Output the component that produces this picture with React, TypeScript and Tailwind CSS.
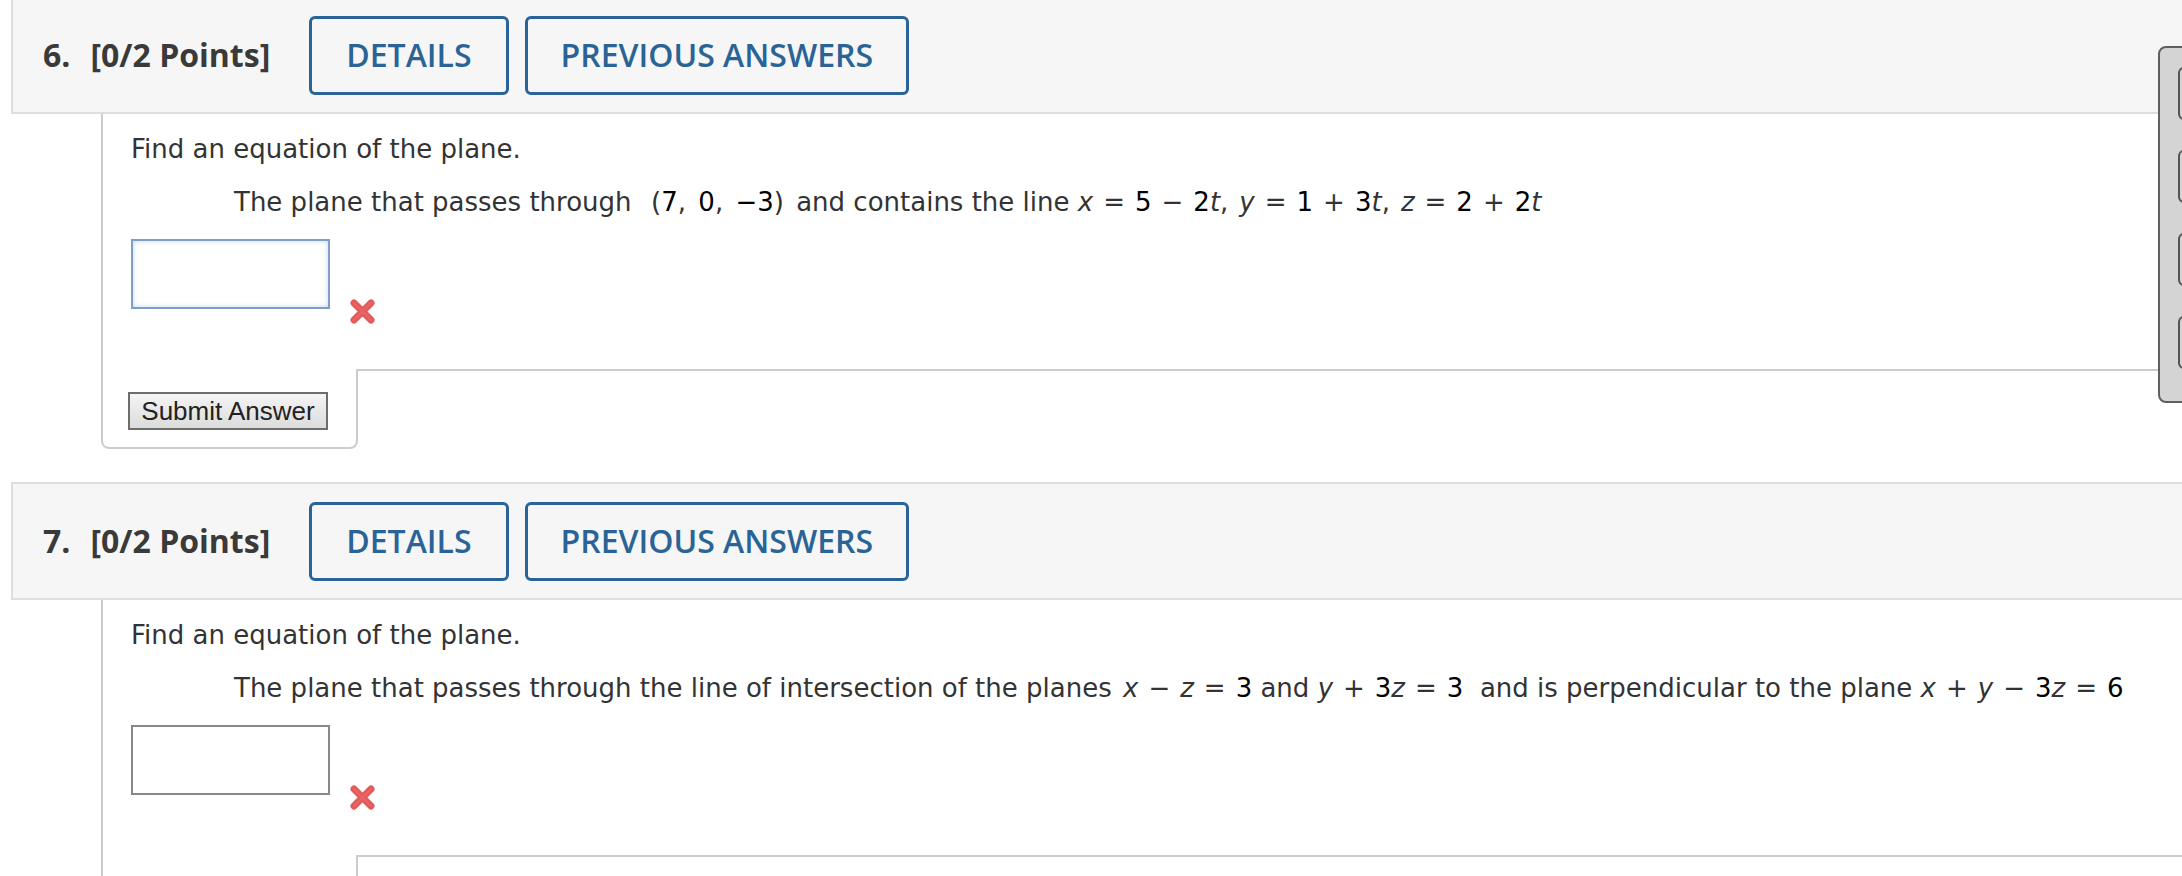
import React from 'react';

const V: React.FC<{ c: string }> = ({ c }) => <i className="italic">{c}</i>;
const N: React.FC<{ c: string }> = ({ c }) => <span className="text-black">{c}</span>;

const Op: React.FC<{ c: string }> = ({ c }) => <span className="mx-[10px]">{c}</span>;
const Comma: React.FC = () => <span className="mr-[4px]">,</span>;
const MathComma: React.FC = () => <span className="mr-[11px]">,</span>;

const RedX: React.FC = () => (
  <svg width="27" height="27" viewBox="0 0 27 27" className="block">
    <path d="M5 5 L22 22 M22 5 L5 22" stroke="#e45a5a" strokeWidth="7" strokeLinecap="round" />
    <path d="M5 5 L22 22 M22 5 L5 22" stroke="#ec7272" strokeWidth="2" strokeLinecap="round" opacity="0.5" />
  </svg>
);

const Header: React.FC<{ num: number }> = ({ num }) => (
  <div className="flex items-center h-[118px] ml-[11px] -mr-[40px] bg-[#f6f6f6] border-2 border-[#dedede] pl-[30px] font-['Open_Sans',sans-serif]">
    <span className="text-[32px] font-bold text-[#3a3a3a] mr-[20px]">{num}.</span>
    <span className="text-[32px] font-bold text-[#3a3a3a]">[0/2 Points]</span>
    <button className="ml-[39px] h-[79px] px-[34px] border-[3px] border-[#2a6496] rounded-[6px] text-[32px] font-semibold text-[#2a6496] bg-transparent">
      DETAILS
    </button>
    <button className="ml-[16px] h-[79px] px-[33px] border-[3px] border-[#2a6496] rounded-[6px] text-[32px] font-semibold text-[#2a6496] bg-transparent">
      PREVIOUS ANSWERS
    </button>
  </div>
);

const Body: React.FC<{ focused?: boolean; children: React.ReactNode }> = ({ focused, children }) => (
  <div className="ml-[101px] font-['DejaVu_Sans',Verdana,sans-serif] text-[26px] leading-[30px] text-[#333]">
    <div className="border-l-2 border-[#cccccc] pl-[28px] pt-[20px] h-[255px]">
      <p>Find an equation of the plane.</p>
      <p className="mt-[23px] pl-[103px] whitespace-nowrap">{children}</p>
      <div className="flex items-start mt-[22px]">
        <div
          className={
            focused
              ? 'w-[199px] h-[70px] bg-white border-2 border-[#7f9fc9] shadow-[inset_0_0_5px_rgba(120,160,220,0.45)]'
              : 'w-[199px] h-[70px] bg-white border-2 border-[#888888]'
          }
        />
        <div className="ml-[19px] mt-[59px]">
          <RedX />
        </div>
      </div>
    </div>
    <div className="flex">
      <div className="w-[257px] h-[80px] border-l-2 border-r-2 border-b-2 border-[#cccccc] rounded-b-[8px] pl-[25px] pt-[23px]">
        <button className="h-[38px] w-[200px] border-2 border-[#6d6d6d] bg-gradient-to-b from-[#f4f4f4] to-[#dcdcdc] font-['Liberation_Sans',Arial,sans-serif] text-[26px] leading-[30px] text-[#222]">
          Submit Answer
        </button>
      </div>
      <div className="flex-1 border-t-2 border-[#cccccc]" />
    </div>
  </div>
);

export default function App() {
  return (
    <div className="relative w-[2182px] h-[876px] overflow-hidden bg-white">
      <div className="-mt-[4px]">
        <Header num={6} />
        <Body focused>
          The plane that passes through&nbsp;&nbsp;
          <span className="ml-[3px]" />(<N c="7" />
          <Comma /> <N c="0" />
          <Comma /> <N c="−3" />)&nbsp;
          <span className="ml-[4px]" />
          and contains the line&nbsp;
          <V c="x" />
          <Op c="=" />
          <N c="5" />
          <Op c="−" />
          <N c="2" />
          <V c="t" />
          <MathComma />
          <V c="y" />
          <Op c="=" />
          <N c="1" />
          <Op c="+" />
          <N c="3" />
          <V c="t" />
          <MathComma />
          <V c="z" />
          <Op c="=" />
          <N c="2" />
          <Op c="+" />
          <N c="2" />
          <V c="t" />
        </Body>
        <div className="mt-[33px]">
          <Header num={7} />
          <Body>
            The plane that passes through the line of intersection of the planes&nbsp;
            <span className="ml-[3px]" />
            <V c="x" />
            <Op c="−" />
            <V c="z" />
            <Op c="=" />
            <N c="3" /> and <V c="y" />
            <Op c="+" />
            <N c="3" />
            <V c="z" />
            <Op c="=" />
            <N c="3" />
            &nbsp; and is perpendicular to the plane&nbsp;
            <V c="x" />
            <Op c="+" />
            <V c="y" />
            <Op c="−" />
            <N c="3" />
            <V c="z" />
            <Op c="=" />
            <N c="6" />
          </Body>
        </div>
      </div>

      {/* floating side panel */}
      <div className="absolute left-[2158px] top-[46px] w-[60px] h-[357px] bg-[#d4d4d4] border-2 border-[#5f5f5f] rounded-[8px] pt-[19px] pl-[18px] flex flex-col gap-[30px]">
        <div className="h-[53px] w-[30px] border-2 border-[#555] rounded-[6px]" />
        <div className="h-[53px] w-[30px] border-2 border-[#555] rounded-[6px]" />
        <div className="h-[53px] w-[30px] border-2 border-[#555] rounded-[6px]" />
        <div className="h-[53px] w-[30px] border-2 border-[#555] rounded-[6px]" />
      </div>
    </div>
  );
}
